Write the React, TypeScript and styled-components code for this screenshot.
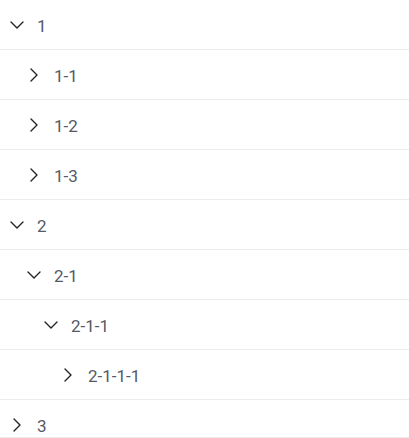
import { ChevronDown, ChevronRight } from 'lucide-react';
import { styled, createGlobalStyle } from 'styled-components';

type Node = { id: string; label: string; level: number; open: boolean };

const NODES: Node[] = [
  { id: '1', label: '1', level: 0, open: true },
  { id: '1-1', label: '1-1', level: 1, open: false },
  { id: '1-2', label: '1-2', level: 1, open: false },
  { id: '1-3', label: '1-3', level: 1, open: false },
  { id: '2', label: '2', level: 0, open: true },
  { id: '2-1', label: '2-1', level: 1, open: true },
  { id: '2-1-1', label: '2-1-1', level: 2, open: true },
  { id: '2-1-1-1', label: '2-1-1-1', level: 3, open: false },
  { id: '3', label: '3', level: 0, open: false },
];

function App() {
  return (
    <>
      <GlobalStyle />
      <StyledTree>
        {NODES.map((node) => (
          <StyledRow key={node.id} $level={node.level}>
            <StyledIcon>
              {node.open ? <ChevronDown size={24} strokeWidth={1.4} /> : <ChevronRight size={24} strokeWidth={1.4} />}
            </StyledIcon>
            <StyledLabel>{node.label}</StyledLabel>
          </StyledRow>
        ))}
      </StyledTree>
    </>
  );
}

export default App;

const GlobalStyle = createGlobalStyle`
  html, body {
    margin: 0;
    background: #ffffff;
  }
`;

const StyledTree = styled.div`
  display: flex;
  flex-direction: column;
  height: 437px;
  overflow: hidden;
  border-bottom: 1px solid #ececec;
`;

const StyledRow = styled.div<{ $level: number }>`
  display: flex;
  flex-shrink: 0;
  align-items: center;
  gap: 8px;
  height: 49px;
  padding-left: ${({ $level }) => 5 + $level * 17}px;
  border-bottom: 1px solid #ececec;
`;

const StyledIcon = styled.span`
  display: flex;
  width: 24px;
  height: 24px;
  color: #222428;
`;

const StyledLabel = styled.span`
  padding-top: 2px;
  font-family: Roboto, 'Noto Sans', sans-serif;
  font-size: 17px;
  color: #545a66;
`;
